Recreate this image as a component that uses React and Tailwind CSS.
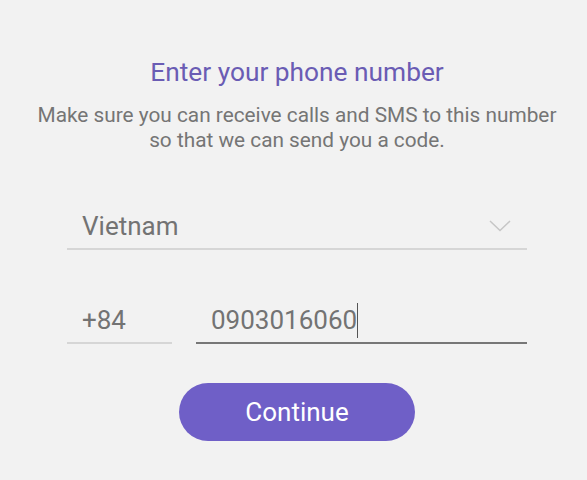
import React from "react";

export default function App() {
  return (
    <div className="w-[587px] h-[480px] bg-[#f2f2f2] font-['Roboto',sans-serif] flex flex-col items-center pl-[7px]">
      {/* Heading */}
      <h1 className="mt-[56px] text-[26.3px] leading-[32px] text-[#6a5cb4]">Enter your phone number</h1>
      <p className="mt-[15px] text-center text-[20.8px] leading-[25px] text-[#757575]">
        Make sure you can receive calls and SMS to this number
        <br />
        so that we can send you a code.
      </p>

      {/* Country select */}
      <div className="mt-[47px] w-[460px] h-[50px] flex justify-between border-b-2 border-[#d6d6d6] pt-[10px] pl-[15px] pr-[16px]">
        <span className="text-[26px] leading-[32px] text-[#737373]">Vietnam</span>
        <svg className="mt-[10px]" width="22" height="12" viewBox="0 0 22 12" fill="none" stroke="#c6c6c6" strokeWidth="1.5">
          <path d="M1 1l10 9.5L21 1" />
        </svg>
      </div>

      {/* Phone number */}
      <div className="mt-[45px] w-[460px] flex gap-[24px]">
        <div className="w-[105px] h-[49px] border-b-2 border-[#d6d6d6] pt-[9px] pl-[15px]">
          <span className="text-[26px] leading-[32px] text-[#737373]">+84</span>
        </div>
        <div className="flex-1 h-[49px] flex items-start border-b-2 border-[#777777] pt-[9px] pl-[15px]">
          <span className="text-[26px] leading-[32px] text-[#737373]">0903016060</span>
          <span className="mt-[-1px] w-px h-[35px] bg-[#555555]" />
        </div>
      </div>

      {/* Submit */}
      <button className="mt-[39px] w-[236px] h-[58px] rounded-full bg-[#6f5fc7] text-white text-[26px]">
        Continue
      </button>
    </div>
  );
}
